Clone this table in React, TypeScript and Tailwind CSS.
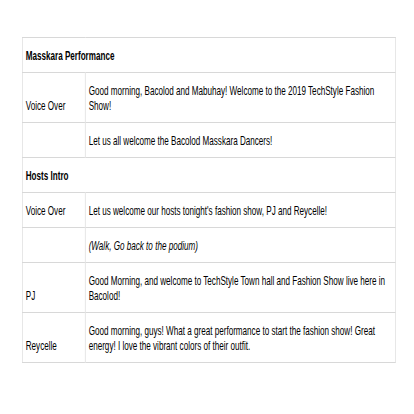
type Row =
  | { kind: "section"; title: string }
  | { kind: "line"; who: string; text: string; italic?: boolean };

const ROWS: Row[] = [
  { kind: "section", title: "Masskara Performance" },
  {
    kind: "line",
    who: "Voice Over",
    text: "Good morning, Bacolod and Mabuhay! Welcome to the 2019 TechStyle Fashion Show!",
  },
  { kind: "line", who: "", text: "Let us all welcome the Bacolod Masskara Dancers!" },
  { kind: "section", title: "Hosts Intro" },
  {
    kind: "line",
    who: "Voice Over",
    text: "Let us welcome our hosts tonight's fashion show, PJ and Reycelle!",
  },
  { kind: "line", who: "", text: "(Walk, Go back to the podium)", italic: true },
  {
    kind: "line",
    who: "PJ",
    text: "Good Morning, and welcome to TechStyle Town hall and Fashion Show live here in Bacolod!",
  },
  {
    kind: "line",
    who: "Reycelle",
    text: "Good morning, guys! What a great performance to start the fashion show! Great energy! I love the vibrant colors of their outfit.",
  },
];

export default function App() {
  return (
    <div className="w-[414px] h-[414px] bg-white pt-[37px] pl-[22px] font-['Liberation_Sans',Arial,sans-serif] text-[13px] leading-[15px] text-black">
      {/* the script table is squeezed sideways, as in the capture */}
      <div className="w-[374px] overflow-hidden">
        <div className="w-[600px] origin-left scale-x-[0.623]">
          <table className="w-full border-collapse border border-[#d8d8d8]">
            <colgroup>
              <col className="w-[101px]" />
              <col />
            </colgroup>
            <tbody>
              {ROWS.map((row, i) =>
                row.kind === "section" ? (
                  <tr key={i} className="border-b border-[#d8d8d8]">
                    <td colSpan={2} className="px-[5px] pt-[10px] pb-[9px] font-bold align-middle">
                      {row.title}
                    </td>
                  </tr>
                ) : (
                  <tr key={i} className="border-b border-[#d8d8d8]">
                    <td className="px-[5px] pt-[10px] pb-[9px] align-bottom border-r border-[#d8d8d8]">
                      {row.who}
                    </td>
                    <td className={"pl-[5px] pr-[6px] pt-[10px] pb-[9px] align-middle" + (row.italic ? " italic" : "")}>
                      {row.text}
                    </td>
                  </tr>
                ),
              )}
            </tbody>
          </table>
        </div>
      </div>
    </div>
  );
}
